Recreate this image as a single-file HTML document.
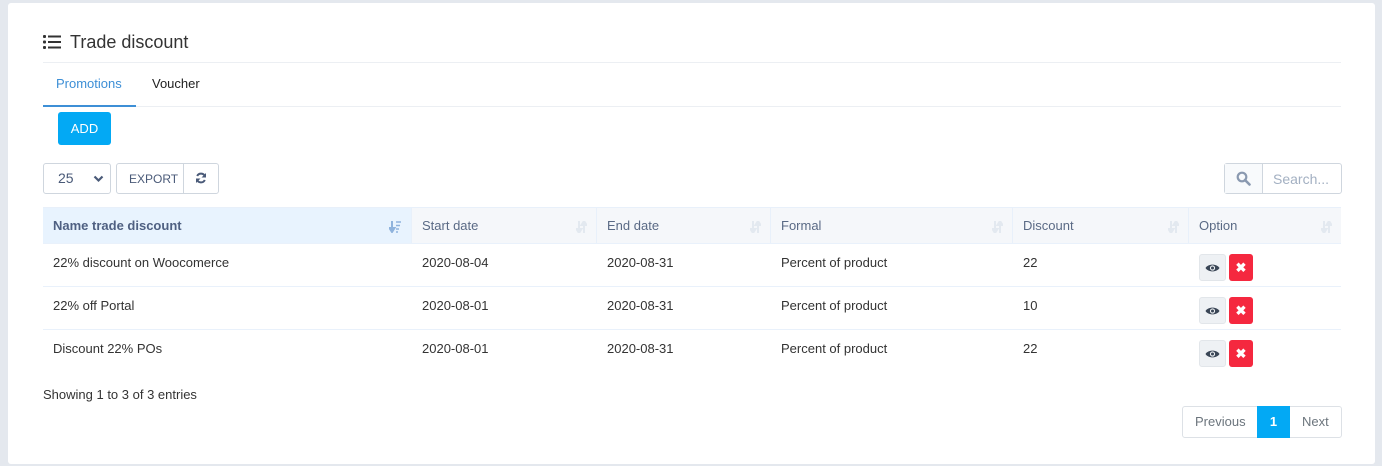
<!DOCTYPE html>
<html><head><meta charset="utf-8"><style>
*{box-sizing:border-box;margin:0;padding:0}
body{width:1382px;height:466px;background:#e4e8ee;font-family:"Liberation Sans",sans-serif;position:relative;overflow:hidden;color:#333}
.card{position:absolute;left:8px;top:3px;width:1367px;height:461px;background:#fff;border-radius:3px}
.a{position:absolute}
.th{position:absolute;top:208px;height:35px;line-height:35px;font-size:13px;color:#5a6a85;padding-left:10px;background:#f5f7fa;border-right:1px solid #e8f0fa}
.td{position:absolute;font-size:13px;color:#333}
.sort{position:absolute;right:9px;top:13px}
.row{position:absolute;left:43px;width:1298px;height:1px;background:#e9f1fb}
.eye{position:absolute;left:1199px;width:27px;height:27px;background:#eef1f4;border:1px solid #e2e6ea;border-radius:3px}
.x{position:absolute;left:1229px;width:24px;height:27px;background:#f5283f;border-radius:3px;color:#fff;font-size:13px;font-weight:bold;text-align:center;line-height:27px}
</style></head><body>
<div class="card"></div>
<svg class="a" style="left:43px;top:35px" width="18" height="14" viewBox="0 0 18 14"><g fill="#333"><rect x="0" y="0" width="3" height="3" rx="1"/><rect x="0" y="5.5" width="3" height="3" rx="1"/><rect x="0" y="11" width="3" height="3" rx="1"/><rect x="5" y="0.5" width="13" height="2"/><rect x="5" y="6" width="13" height="2"/><rect x="5" y="11.5" width="13" height="2"/></g></svg>
<div class="a" style="left:70px;top:32px;font-size:18px;color:#333">Trade discount</div>
<div class="a" style="left:43px;top:62px;width:1298px;height:1px;background:#eceff3"></div>
<div class="a" style="left:56px;top:76px;font-size:13px;color:#3d8fd6">Promotions</div>
<div class="a" style="left:152px;top:76px;font-size:13px;color:#222">Voucher</div>
<div class="a" style="left:43px;top:106px;width:1298px;height:1px;background:#eceff3"></div>
<div class="a" style="left:43px;top:105px;width:93px;height:2px;background:#3d8fd6"></div>
<div class="a" style="left:58px;top:112px;width:53px;height:33px;background:#03a9f4;border-radius:3px;color:#fff;font-size:13px;text-align:center;line-height:33px">ADD</div>
<div class="a" style="left:43px;top:163px;width:68px;height:31px;border:1px solid #cfd6de;border-radius:3px;font-size:14px;color:#4a5a78;line-height:29px;padding-left:14px">25<svg style="position:absolute;right:6px;top:11px" width="11" height="8" viewBox="0 0 11 8"><path d="M1.5 1.5L5.5 5.5L9.5 1.5" fill="none" stroke="#4a5a78" stroke-width="2.2"/></svg></div>
<div class="a" style="left:116px;top:163px;width:103px;height:31px;border:1px solid #cfd6de;border-radius:3px"></div>
<div class="a" style="left:183px;top:163px;width:1px;height:31px;background:#cfd6de"></div>
<div class="a" style="left:129px;top:172px;font-size:12px;color:#4a5a78">EXPORT</div>
<svg class="a" style="left:195px;top:172px" width="12" height="12" viewBox="0 0 12 12"><path d="M10 4.5A4.2 4.2 0 0 0 2.2 4M2 7.5A4.2 4.2 0 0 0 9.8 8" fill="none" stroke="#4a5a78" stroke-width="2"/><path d="M11 1V5.5H6.5Z M1 11V6.5H5.5Z" fill="#4a5a78"/></svg>
<div class="a" style="left:1224px;top:163px;width:118px;height:31px;border:1px solid #cfd6de;border-radius:3px"></div>
<div class="a" style="left:1225px;top:164px;width:38px;height:29px;background:#f8fafc;border-right:1px solid #cfd6de"></div>
<svg class="a" style="left:1236px;top:171px" width="15" height="15" viewBox="0 0 15 15"><circle cx="6" cy="6" r="4.3" fill="none" stroke="#8a99b0" stroke-width="2.2"/><line x1="9" y1="9" x2="13.5" y2="13.5" stroke="#8a99b0" stroke-width="2.6" stroke-linecap="round"/></svg>
<div class="a" style="left:1273px;top:171px;font-size:14px;color:#a3b0c2">Search...</div>
<div class="a" style="left:43px;top:207px;width:1298px;height:1px;background:#e8f0fa"></div>
<div class="th" style="left:43px;width:369px;background:#e8f3fe;font-weight:bold;color:#4f6082">Name trade discount<svg class="sort" width="13" height="12" viewBox="0 0 13 12"><path d="M3 0V9M0.5 7L3 11L5.5 7Z" stroke="#8fb3dd" stroke-width="2" fill="#8fb3dd"/><path d="M7 1H12M7 4.5H11M7 8H10M7 11H9" stroke="#8fb3dd" stroke-width="1.6"/></svg></div>
<div class="th" style="left:412px;width:185px">Start date<svg class="sort" width="11" height="12" viewBox="0 0 11 12"><path d="M3 0V10M0.5 8L3 12L5.5 8Z M8 12V2M5.5 4L8 0L10.5 4Z" stroke="#e3e9f0" stroke-width="2" fill="#e3e9f0"/></svg></div>
<div class="th" style="left:597px;width:174px">End date<svg class="sort" width="11" height="12" viewBox="0 0 11 12"><path d="M3 0V10M0.5 8L3 12L5.5 8Z M8 12V2M5.5 4L8 0L10.5 4Z" stroke="#e3e9f0" stroke-width="2" fill="#e3e9f0"/></svg></div>
<div class="th" style="left:771px;width:242px">Formal<svg class="sort" width="11" height="12" viewBox="0 0 11 12"><path d="M3 0V10M0.5 8L3 12L5.5 8Z M8 12V2M5.5 4L8 0L10.5 4Z" stroke="#e3e9f0" stroke-width="2" fill="#e3e9f0"/></svg></div>
<div class="th" style="left:1013px;width:176px">Discount<svg class="sort" width="11" height="12" viewBox="0 0 11 12"><path d="M3 0V10M0.5 8L3 12L5.5 8Z M8 12V2M5.5 4L8 0L10.5 4Z" stroke="#e3e9f0" stroke-width="2" fill="#e3e9f0"/></svg></div>
<div class="th" style="left:1189px;width:152px;border-right:none">Option<svg class="sort" width="11" height="12" viewBox="0 0 11 12"><path d="M3 0V10M0.5 8L3 12L5.5 8Z M8 12V2M5.5 4L8 0L10.5 4Z" stroke="#e3e9f0" stroke-width="2" fill="#e3e9f0"/></svg></div>
<div class="row" style="top:243px"></div>
<div class="row" style="top:286px"></div>
<div class="row" style="top:329px"></div>

<div class="td" style="left:53px;top:255px">22% discount on Woocomerce</div>
<div class="td" style="left:422px;top:255px">2020-08-04</div>
<div class="td" style="left:607px;top:255px">2020-08-31</div>
<div class="td" style="left:781px;top:255px">Percent of product</div>
<div class="td" style="left:1023px;top:255px">22</div>
<div class="td" style="left:53px;top:298px">22% off Portal</div>
<div class="td" style="left:422px;top:298px">2020-08-01</div>
<div class="td" style="left:607px;top:298px">2020-08-31</div>
<div class="td" style="left:781px;top:298px">Percent of product</div>
<div class="td" style="left:1023px;top:298px">10</div>
<div class="td" style="left:53px;top:341px">Discount 22% POs</div>
<div class="td" style="left:422px;top:341px">2020-08-01</div>
<div class="td" style="left:607px;top:341px">2020-08-31</div>
<div class="td" style="left:781px;top:341px">Percent of product</div>
<div class="td" style="left:1023px;top:341px">22</div>

<div class="eye" style="top:254px"><svg style="position:absolute;left:5px;top:8px" width="15" height="10" viewBox="0 0 15 10"><path d="M0.5 5C3 0.5 12 0.5 14.5 5C12 9.5 3 9.5 0.5 5Z" fill="#3a4656"/><circle cx="7.5" cy="5" r="2.6" fill="#eef1f4"/><circle cx="7.5" cy="5" r="1.5" fill="#3a4656"/></svg></div>
<div class="x" style="top:254px">&#10006;</div>
<div class="eye" style="top:297px"><svg style="position:absolute;left:5px;top:8px" width="15" height="10" viewBox="0 0 15 10"><path d="M0.5 5C3 0.5 12 0.5 14.5 5C12 9.5 3 9.5 0.5 5Z" fill="#3a4656"/><circle cx="7.5" cy="5" r="2.6" fill="#eef1f4"/><circle cx="7.5" cy="5" r="1.5" fill="#3a4656"/></svg></div>
<div class="x" style="top:297px">&#10006;</div>
<div class="eye" style="top:340px"><svg style="position:absolute;left:5px;top:8px" width="15" height="10" viewBox="0 0 15 10"><path d="M0.5 5C3 0.5 12 0.5 14.5 5C12 9.5 3 9.5 0.5 5Z" fill="#3a4656"/><circle cx="7.5" cy="5" r="2.6" fill="#eef1f4"/><circle cx="7.5" cy="5" r="1.5" fill="#3a4656"/></svg></div>
<div class="x" style="top:340px">&#10006;</div>

<div class="td" style="left:43px;top:387px">Showing 1 to 3 of 3 entries</div>
<div class="a" style="left:1182px;top:406px;width:160px;height:32px;border:1px solid #dde1e6;border-radius:3px"></div>
<div class="a" style="left:1195px;top:414px;font-size:13px;color:#6c757d">Previous</div>
<div class="a" style="left:1257px;top:406px;width:33px;height:32px;background:#03a9f4;color:#fff;font-size:13px;text-align:center;line-height:32px;font-weight:bold">1</div>
<div class="a" style="left:1302px;top:414px;font-size:13px;color:#6c757d">Next</div>
</body></html>
